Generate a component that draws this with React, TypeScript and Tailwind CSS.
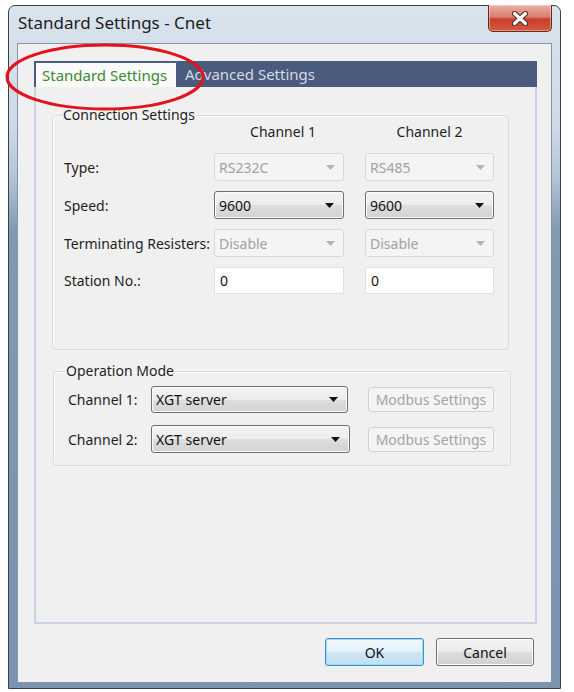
import React from "react";

function Arrow({ color }: { color: string }) {
  return (
    <svg width="9" height="5" viewBox="0 0 9 5" className="shrink-0">
      <polygon points="0,0 9,0 4.5,5" fill={color} />
    </svg>
  );
}

function DisabledCombo({ value }: { value: string }) {
  return (
    <div className="flex h-[28px] items-center justify-between rounded-[3px] border border-[#d9d9d9] bg-[#f4f4f4] pl-[4px] pr-[8px] text-[#a2a2a2]">
      <span>{value}</span>
      <Arrow color="#b4b4b4" />
    </div>
  );
}

function Combo({ value, className }: { value: string; className: string }) {
  return (
    <div
      className={`flex items-center justify-between rounded-[3px] border border-[#6f6f6f] bg-[linear-gradient(180deg,#f4f4f4_0%,#ececec_50%,#dedede_51%,#d2d2d2_100%)] pl-[4px] pr-[9px] text-[#111] shadow-[inset_0_0_0_1px_#fbfbfb] ${className}`}
    >
      <span>{value}</span>
      <Arrow color="#111" />
    </div>
  );
}

function TextInput({ value }: { value: string }) {
  return (
    <div className="flex h-[27px] items-center border border-[#dde1e8] bg-white pl-[5px] text-[#111]">
      {value}
    </div>
  );
}

function ModbusButton() {
  return (
    <div className="flex h-[25px] w-[126px] items-center justify-center rounded-[3px] border border-[#cfd1d4] bg-[#f4f4f4] text-[#a3a3a3]">
      Modbus Settings
    </div>
  );
}

export default function App() {
  return (
    <div className="relative h-[692px] w-[574px] overflow-hidden bg-white font-['Noto_Sans','DejaVu_Sans',sans-serif] text-[14px] text-[#1e1e1e]">
      {/* window */}
      <div className="ml-[8px] mt-[5px] flex h-[684px] w-[553px] flex-col rounded-t-[7px] border border-[#3a4047] bg-[linear-gradient(180deg,#d9e3ed_0%,#cdd9e6_18%,#b3c5d7_25%,#8199b3_33%,#7a93ae_100%)] px-[8px] pb-[5px]">
        {/* title bar */}
        <div className="flex h-[37px] items-start justify-between">
          <div className="pl-[1px] pt-[6px] text-[17px] leading-[22px] text-[#1c1c1c]">
            Standard Settings - Cnet
          </div>
          <div className="-mt-[1px] flex h-[27px] w-[64px] items-center justify-center rounded-b-[5px] border border-t-0 border-[#6a2a22] bg-[linear-gradient(180deg,#e9b0a4_0%,#d8806f_45%,#c7412b_55%,#d5583d_100%)] shadow-[inset_0_0_0_1px_rgba(255,255,255,0.35)]">
            <svg width="18" height="15" viewBox="0 0 18 15">
              <path
                d="M3.5 2.5 L14.5 12.5 M14.5 2.5 L3.5 12.5"
                fill="none"
                stroke="#4a2a25"
                strokeWidth="5.2"
                strokeLinecap="round"
              />
              <path
                d="M3.5 2.5 L14.5 12.5 M14.5 2.5 L3.5 12.5"
                fill="none"
                stroke="#ffffff"
                strokeWidth="3.2"
                strokeLinecap="round"
              />
            </svg>
          </div>
        </div>

        {/* client area */}
        <div className="flex flex-1 flex-col border border-[#8395aa] bg-[#f0f0f0]">
          <div className="ml-[16px] mt-[17px] flex w-[503px] flex-col">
            {/* tab strip */}
            <div className="flex h-[26px] items-end bg-[#4b5b7e] pl-[2px]">
              <div className="-mb-[1px] flex h-[25px] w-[140px] items-center bg-[#fafafa] pl-[6px] text-[15px] text-[#3b8a2c]">
                Standard Settings
              </div>
              <div className="flex h-[25px] items-center pl-[9px] text-[15px] text-[#d4d9e3]">
                Advanced Settings
              </div>
            </div>
            {/* tab page */}
            <div className="flex h-[537px] flex-col border-x-2 border-b-2 border-[#cbd2e3] bg-[#f0f0f0]">
              <fieldset className="ml-[16px] mt-[19px] h-[244px] w-[457px] min-w-0 rounded-[4px] border border-[#d5dbe2] shadow-[inset_1px_1px_0_#fbfbfb]">
                <legend className="ml-[9px] px-[1px] leading-[18px]">Connection Settings</legend>
                <div className="flex flex-col pl-[11px]">
                  <div className="grid h-[16px] grid-cols-[129px_130px_129px] gap-x-[21px] leading-[16px]">
                    <div />
                    <div className="pl-[8px] text-center">Channel 1</div>
                    <div className="text-center">Channel 2</div>
                  </div>
                  <div className="mt-[13px] flex flex-col gap-[10px]">
                    <div className="grid grid-cols-[129px_130px_129px] items-center gap-x-[21px]">
                      <div>Type:</div>
                      <DisabledCombo value="RS232C" />
                      <DisabledCombo value="RS485" />
                    </div>
                    <div className="grid grid-cols-[129px_130px_129px] items-center gap-x-[21px]">
                      <div>Speed:</div>
                      <Combo value="9600" className="h-[28px]" />
                      <Combo value="9600" className="h-[28px]" />
                    </div>
                    <div className="grid grid-cols-[129px_130px_129px] items-center gap-x-[21px]">
                      <div className="whitespace-nowrap">Terminating Resisters:</div>
                      <DisabledCombo value="Disable" />
                      <DisabledCombo value="Disable" />
                    </div>
                    <div className="grid grid-cols-[129px_130px_129px] items-center gap-x-[21px]">
                      <div>Station No.:</div>
                      <TextInput value="0" />
                      <TextInput value="0" />
                    </div>
                  </div>
                </div>
              </fieldset>

              <fieldset className="ml-[17px] mt-[12px] h-[104px] w-[458px] min-w-0 rounded-[4px] border border-[#d5dbe2] shadow-[inset_1px_1px_0_#fbfbfb]">
                <legend className="ml-[11px] px-[1px] leading-[18px]">Operation Mode</legend>
                <div className="mt-[6px] flex flex-col gap-[12px] pl-[14px]">
                  <div className="flex h-[27px] items-center">
                    <div className="w-[83px]">Channel 1:</div>
                    <Combo value="XGT server" className="h-[27px] w-[197px]" />
                    <div className="ml-[20px]">
                      <ModbusButton />
                    </div>
                  </div>
                  <div className="flex h-[28px] items-center">
                    <div className="w-[83px]">Channel 2:</div>
                    <Combo value="XGT server" className="h-[28px] w-[199px]" />
                    <div className="ml-[18px]">
                      <ModbusButton />
                    </div>
                  </div>
                </div>
              </fieldset>
            </div>
          </div>

          {/* dialog buttons */}
          <div className="mt-[14px] flex justify-end gap-[12px] pr-[17px]">
            <div className="flex h-[28px] w-[99px] items-center justify-center rounded-[3px] border border-[#3c8fc8] bg-[linear-gradient(180deg,#f2f9fd_0%,#e3f1fa_50%,#cfe6f4_51%,#c2e0f2_100%)] text-[#111] shadow-[inset_0_0_0_1px_#9fdcf8]">
              OK
            </div>
            <div className="flex h-[28px] w-[98px] items-center justify-center rounded-[3px] border border-[#707070] bg-[linear-gradient(180deg,#f3f3f3_0%,#ebebeb_50%,#dddddd_51%,#d0d0d0_100%)] text-[#111] shadow-[inset_0_0_0_1px_#fcfcfc]">
              Cancel
            </div>
          </div>
        </div>
      </div>

      {/* red annotation ellipse */}
      <svg
        className="pointer-events-none absolute left-0 top-0"
        width="574"
        height="692"
        viewBox="0 0 574 692"
      >
        <ellipse cx="105" cy="77" rx="98" ry="32" fill="none" stroke="#e3121b" strokeWidth="3" />
      </svg>
    </div>
  );
}
